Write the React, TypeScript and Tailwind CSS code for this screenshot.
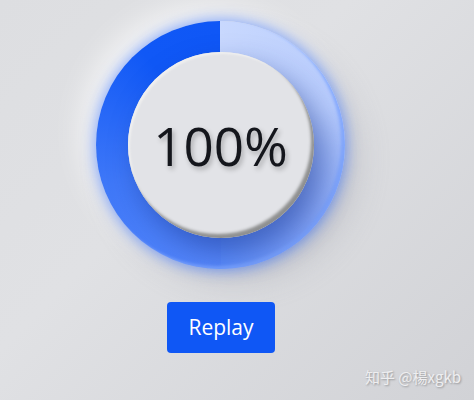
export default function App() {
  return (
    <div className="relative h-[400px] w-[474px] overflow-hidden bg-[linear-gradient(135deg,#dddee1_0%,#e0e1e4_40%,#d1d2d6_100%)] pl-[96px] pt-[21px] font-['Open_Sans',sans-serif]">
      {/* Progress ring */}
      <div className="flex h-[248px] w-[249px] items-center justify-center rounded-full bg-[conic-gradient(#c8d8fe_0deg,#b8ccfd_70deg,#86a6f8_130deg,#5a8bfb_180deg,#5787fa_180deg,#3f78f8_250deg,#1058f6_320deg,#0f57f6_360deg)] shadow-[0_0_14px_2px_rgba(50,110,255,0.55),-14px_-14px_30px_rgba(255,255,255,0.7),14px_14px_30px_rgba(150,152,165,0.3),inset_-4px_-3px_3px_rgba(125,165,255,0.8)]">
        <div className="flex h-[186px] w-[186px] items-center justify-center rounded-full bg-[#e2e3e7] shadow-[inset_-3px_-4px_3px_#8f9090,inset_2px_2px_2px_#efefef,10px_14px_28px_rgba(20,50,140,0.5)]">
          <span className="text-[53px] leading-none text-[#14161c] [text-shadow:2px_3px_5px_rgba(0,0,0,0.25)]">
            100%
          </span>
        </div>
      </div>

      <button className="ml-[71px] mt-[33px] flex h-[51px] w-[108px] items-center justify-center rounded-[4px] bg-[#0f57f5] text-[21px] font-medium text-white">
        Replay
      </button>

      {/* Watermark */}
      <div className="absolute bottom-[16px] right-[13px] font-['Noto_Sans_CJK_SC',sans-serif] text-[15px] leading-none text-[#eeeef0] [text-shadow:1px_1px_2px_rgba(0,0,0,0.3)]">
        知乎 @楊xgkb
      </div>
    </div>
  );
}
